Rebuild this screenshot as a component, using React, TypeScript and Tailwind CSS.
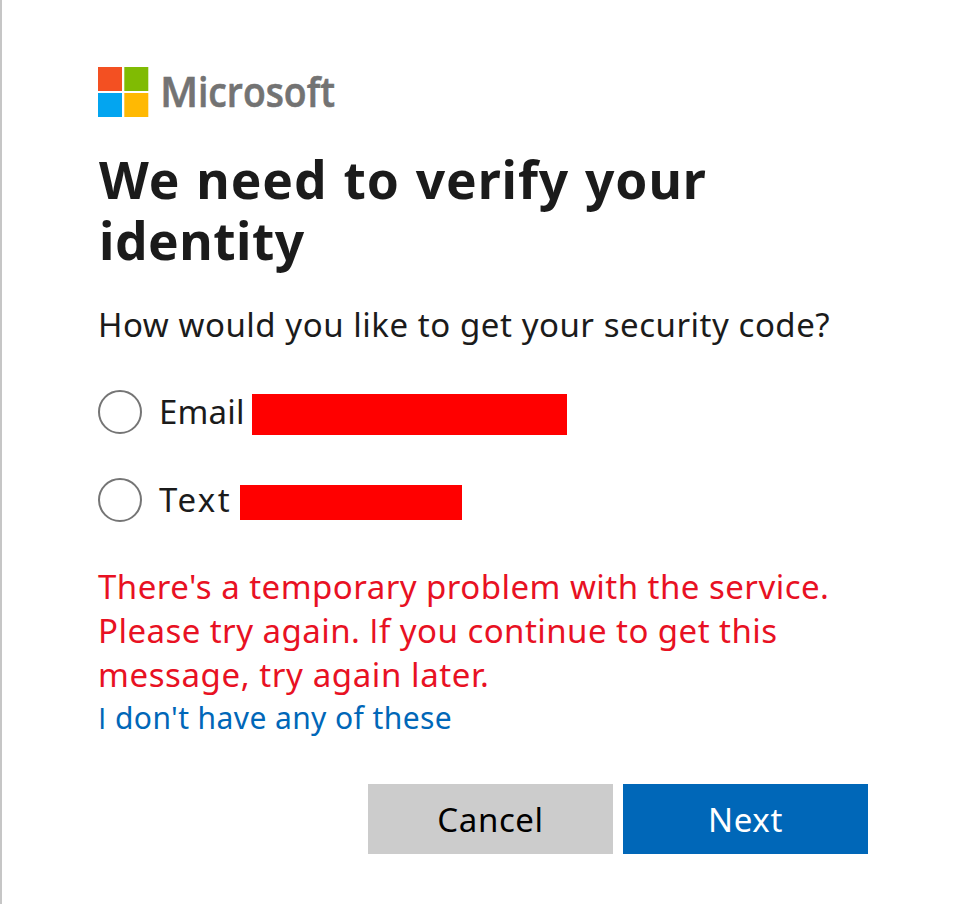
function MicrosoftLogo() {
  return (
    <svg width="240" height="50" viewBox="0 0 240 50" className="block overflow-visible" role="img" aria-label="Microsoft">
      <path fill="#f35022" d="M0 0h24v24H0z" />
      <path fill="#80bb03" d="M26.3 0H50.3v24H26.3z" />
      <path fill="#03a5f0" d="M0 26h24v24H0z" />
      <path fill="#ffb903" d="M26.3 26H50.3v24H26.3z" />
      <g fontSize="41.5" fontWeight="600" fill="#737373" stroke="#737373" strokeWidth="0.6" className="font-['Open_Sans',sans-serif]">
        <text x="62" y="40.2">M</text>
        <text x="99.9" y="40.2" textLength="137" lengthAdjust="spacingAndGlyphs">icrosoft</text>
      </g>
    </svg>
  );
}

// Capital I drawn without serifs.
function PlainI() {
  return <span className="font-['Open_Sans',sans-serif]">I</span>;
}

function Option({ label, labelClass, barClass }: { label: string; labelClass: string; barClass: string }) {
  return (
    <label className="flex h-11">
      <input type="radio" name="proof" className="size-11 shrink-0 appearance-none rounded-full border-2 border-[#757575] bg-white" />
      <span className={`ml-[17px] shrink-0 ${labelClass}`}>{label}</span>
      <span className={`shrink-0 bg-[#ff0000] ${barClass}`} />
    </label>
  );
}

export default function App() {
  return (
    <main className="h-[904px] w-[962px] overflow-hidden border-l-2 border-[#c6c6c6] bg-white pt-[67px] pl-24 font-['Noto_Sans',sans-serif] text-[33px] leading-[44px] text-[#1b1b1b]">
      <MicrosoftLogo />
      <h1 className="mt-8 pl-px text-[51.5px] leading-[61px] font-bold whitespace-nowrap">
        <span className="block tracking-[0.9px] [word-spacing:1.7px]">We need to verify your</span>
        <span className="block tracking-[0.5px]">identity</span>
      </h1>
      <p className="mt-8 tracking-[0.5px] [word-spacing:0.2px] whitespace-nowrap">How would you like to get your security code?</p>
      <div className="mt-[43px] flex flex-col gap-11">
        <Option label="Email" labelClass="w-[93px] tracking-[0.2px]" barClass="mt-1 h-[41px] w-[315px]" />
        <Option label="Text" labelClass="w-[81px] tracking-[2.4px]" barClass="mt-[7px] h-[35px] w-[222px]" />
      </div>
      <p className="mt-[43px] whitespace-nowrap text-[#e81123]">
        <span className="block tracking-[0.47px]">There's a temporary problem with the service.</span>
        <span className="block tracking-[0.45px]">
          Please try again. <PlainI />f you continue to get this
        </span>
        <span className="block tracking-[0.6px]">message, try again later.</span>
      </p>
      <a href="#" className="mt-px block text-[30px] leading-[40px] tracking-[0.4px] text-[#0067b8]">
        <PlainI /> don't have any of these
      </a>
      <div className="mt-[46px] flex gap-2.5 pl-[270px]">
        <button className="h-[70px] w-[245px] bg-[#cccccc] pt-0.5 tracking-[0.6px] text-black">Cancel</button>
        <button className="h-[70px] w-[245px] bg-[#0067b8] pt-0.5 tracking-[0.6px] text-white">Next</button>
      </div>
    </main>
  );
}
